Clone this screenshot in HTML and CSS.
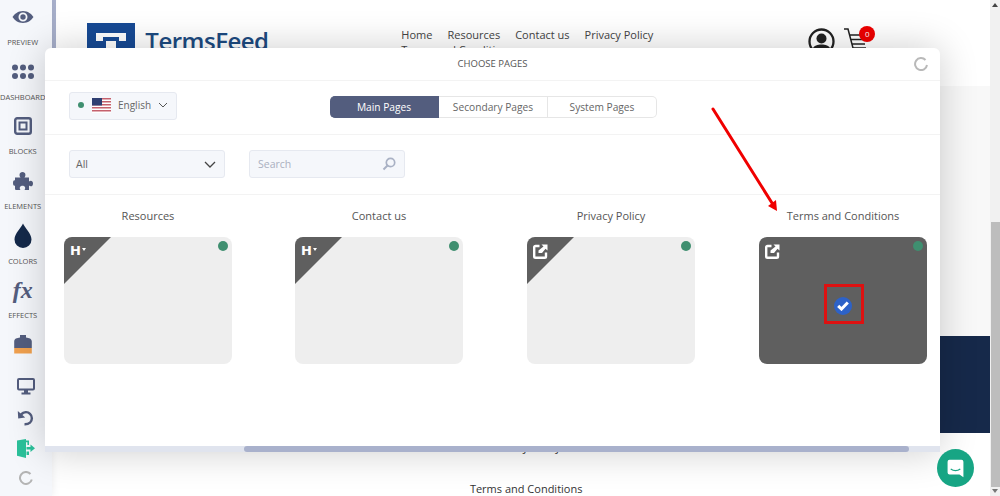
FILE: index.html
```html
<!doctype html>
<html><head>
  <title>TermsFeed - Choose pages</title>
  <meta charset="utf-8">
  <link rel="stylesheet" href="styles.css">
</head><body>

  <!-- editor toolbar -->
  <nav class="sidebar">
    <div class="tool">
      <svg class="tool-icon" width="24" height="16" viewBox="0 0 24 16"><path fill="#535d7e" fill-rule="evenodd" d="M12 2C7 2 3.500 5 1.500 8c2 3 5.500 6 10.500 6s8.500-3 10.500-6C20.500 5 17 2 12 2zm0 1.500a4.500 4.500 0 1 1 0 9 4.500 4.500 0 0 1 0-9z"/><circle cx="12" cy="8" r="2.700" fill="#535d7e"/></svg>
      <span>PREVIEW</span>
    </div>
    <div class="tool">
      <svg class="tool-icon" width="24" height="16" viewBox="0 0 24 16" fill="#535d7e"><circle cx="4" cy="3.500" r="3"/><circle cx="12" cy="3.500" r="3"/><circle cx="20" cy="3.500" r="3"/><circle cx="4" cy="12" r="3"/><circle cx="12" cy="12" r="3"/><circle cx="20" cy="12" r="3"/></svg>
      <span>DASHBOARD</span>
    </div>
    <div class="tool">
      <svg class="tool-icon" width="18" height="18" viewBox="0 0 18 18"><rect x="1.200" y="1.200" width="15.600" height="15.600" rx="2" fill="none" stroke="#535d7e" stroke-width="2.400"/><rect x="5.500" y="5.500" width="7" height="7" fill="none" stroke="#535d7e" stroke-width="2"/></svg>
      <span>BLOCKS</span>
    </div>
    <div class="tool">
      <svg class="tool-icon" width="20" height="20" viewBox="0 0 20 20"><path fill="#535d7e" d="M2 6.500H7.500C6 5 6 1 9.500 1S13 5 11.500 6.500H16v4c1.500-1.500 4-1 4 2s-2.500 3.500-4 2V19h-4.500c1.500-2 .5-4.200-2-4.200S6 17 7.500 19H3.500c-1 0-1.500-.5-1.500-1.500v-3c-.5.500-2 .5-2-2.500s1.500-3 2-2.500z"/></svg>
      <span>ELEMENTS</span>
    </div>
    <div class="tool">
      <svg class="tool-icon" width="18" height="25" viewBox="0 0 18 25"><path fill="#14294a" d="M9 0c1.500 4 8.500 10 8.500 16a8.500 8.500 0 0 1-17 0C.5 10 7.500 4 9 0z"/></svg>
      <span>COLORS</span>
    </div>
    <div class="tool">
      <span class="fx-icon">fx</span>
      <span>EFFECTS</span>
    </div>
    <div class="tool tool-plain">
      <svg class="tool-icon" width="18" height="19" viewBox="0 0 18 19"><path fill="#535d7e" d="M6 0h6v2.500c3 .4 5.800 1.200 5.800 4V13H.2V6.500c0-2.800 2.800-3.600 5.800-4z"/><path fill="#f0a04e" d="M.2 13h17.600v5.500H.2z"/></svg>
    </div>
    <div class="tool-small first">
      <svg width="18" height="17" viewBox="0 0 18 17"><rect x="1" y="1" width="16" height="10.500" rx="1" fill="none" stroke="#535d7e" stroke-width="2"/><path fill="#535d7e" d="M7 12h4v2.500h2.500V16.500h-9v-2H7z"/></svg>
    </div>
    <div class="tool-small">
      <svg width="18" height="18" viewBox="0 0 18 18"><path fill="none" stroke="#535d7e" stroke-width="2.400" d="M4 5.500c2.800-2.600 6.500-3 9-.7 2.500 2.300 2.500 6.500 0 8.800-1.500 1.300-3.300 1.800-5.500 1.700"/><path fill="#535d7e" d="M.8 2l.4 7.400 7-.9z"/></svg>
    </div>
    <div class="tool-small">
      <svg width="18" height="19" viewBox="0 0 18 19"><path fill="#2bc09a" d="M0 1.500 9 0v1.500h3V6h-1.600V3.200H9V19L0 16.800z"/><path fill="#2bc09a" d="M10.400 12.500H12V16H9.500v-3.500z"/><path fill="#2bc09a" d="M9.500 8h4V5.500L18 9.300l-4.500 3.700v-2.500h-4z"/></svg>
    </div>
    <div class="tool-small last">
      <svg width="14" height="14" viewBox="0 0 14 14"><path fill="none" stroke="#b4b4b4" stroke-width="2" d="M11.500 3A6 6 0 1 0 12.800 8.500"/></svg>
    </div>
  </nav>
  <div class="rail"></div>

  <!-- site being edited, behind the dialog -->
  <main class="site">
    <header class="site-header">
      <div class="logo">
        <svg width="48" height="48" viewBox="0 0 48 48"><path fill="#174a94" d="M0 0h48v48H0z"/><path fill="#fff" d="M9 10h30v8h-7v-4H16v4H9zM19 18h10v30H19z"/></svg>
        <span class="logo-text">TermsFeed</span>
      </div>
      <ul class="site-nav">
        <li>Home</li>
        <li>Resources</li>
        <li>Contact us</li>
        <li>Privacy Policy</li>
        <li>Terms and Conditions</li>
      </ul>
      <div class="site-actions">
        <svg width="27" height="27" viewBox="0 0 27 27"><circle cx="13.500" cy="13.500" r="12" fill="#fff" stroke="#222" stroke-width="2.300"/><circle cx="13.500" cy="10.500" r="5" fill="#222"/><path fill="#222" d="M4.500 21c1.500-3.500 5-4.500 9-4.500s7.500 1 9 4.500c-2 2.800-5.500 4-9 4s-7-1.200-9-4z"/></svg>
        <div class="cart">
          <svg width="27" height="26" viewBox="0 0 27 26"><path fill="none" stroke="#222" stroke-width="1.500" d="M1 1h4l5 19h13M7 7h18M8 11.500h15M9 16h13"/><circle cx="12" cy="23.500" r="1.800" fill="#222"/><circle cx="21" cy="23.500" r="1.800" fill="#222"/></svg>
          <span class="cart-count">0</span>
        </div>
      </div>
    </header>
    <section class="site-body"></section>
    <section class="site-band"></section>
    <footer class="site-footer">
      <p>Privacy Policy</p>
      <p>Terms and Conditions</p>
    </footer>
  </main>

  <div class="scrollbar">
    <span class="arrow-up"></span>
    <span class="thumb"></span>
    <span class="arrow-down"></span>
  </div>

  <!-- choose pages dialog -->
  <div class="modal">
    <div class="modal-head">
      <span>CHOOSE PAGES</span>
      <svg class="head-spinner" width="14" height="14" viewBox="0 0 14 14"><path fill="none" stroke="#b9b9b9" stroke-width="2" d="M11.500 3A6 6 0 1 0 13 8"/></svg>
    </div>

    <div class="toolbar">
      <div class="lang-select">
        <i class="dot"></i>
        <svg width="19" height="15" viewBox="0 0 19 15"><path fill="#fff" d="M0 0h19v15H0z"/><path fill="#c5616d" d="M0 0h19v1.500H0zM0 3h19v1.500H0zM0 6h19v1.500H0zM0 9h19v1.500H0zM0 12h19v1.500H0z"/><path fill="#2f3f72" d="M0 0h10v7.500H0z"/></svg>
        <span>English</span>
        <svg class="chevron" width="10" height="6" viewBox="0 0 10 6"><path fill="none" stroke="#555" stroke-width="1" d="M1 1l4 4 4-4"/></svg>
      </div>
      <div class="tabs">
        <span class="tab active">Main Pages</span>
        <span class="tab">Secondary Pages</span>
        <span class="tab">System Pages</span>
      </div>
    </div>

    <div class="filters">
      <div class="field">
        <span>All</span>
        <svg width="12" height="7" viewBox="0 0 12 7"><path fill="none" stroke="#444" stroke-width="1.300" d="M1 1l5 5 5-5"/></svg>
      </div>
      <div class="field search">
        <span>Search</span>
        <svg width="14" height="14" viewBox="0 0 14 14"><circle cx="8.500" cy="5.500" r="4.200" fill="none" stroke="#a9b1c4" stroke-width="1.700"/><path stroke="#a9b1c4" stroke-width="2" d="M5.500 8.500 1.500 12.500"/></svg>
      </div>
    </div>

    <div class="pages">
      <div class="page-item">
        <h4>Resources</h4>
        <div class="card">
          <span class="corner"></span>
          <span class="home-mark">H<i></i></span>
          <i class="dot big"></i>
        </div>
      </div>
      <div class="page-item">
        <h4>Contact us</h4>
        <div class="card">
          <span class="corner"></span>
          <span class="home-mark">H<i></i></span>
          <i class="dot big"></i>
        </div>
      </div>
      <div class="page-item">
        <h4>Privacy Policy</h4>
        <div class="card">
          <span class="corner"></span>
          <svg class="link-mark" width="15" height="15" viewBox="0 0 15 15"><path fill="none" stroke="#fff" stroke-width="2.400" d="M6.500 2H2.500A1.300 1.300 0 0 0 1.200 3.300v9.200a1.300 1.300 0 0 0 1.300 1.300h9.200a1.300 1.300 0 0 0 1.300-1.300V8.500"/><path fill="#fff" d="M8.500.5h6V6.500l-2-1.800-3.500 4.300H5.500V6.500L10.500 2.500z"/></svg>
          <i class="dot big"></i>
        </div>
      </div>
      <div class="page-item">
        <h4>Terms and Conditions</h4>
        <div class="card selected">
          <svg class="link-mark" width="15" height="15" viewBox="0 0 15 15"><path fill="none" stroke="#fff" stroke-width="2.400" d="M6.500 2H2.500A1.300 1.300 0 0 0 1.200 3.300v9.200a1.300 1.300 0 0 0 1.300 1.300h9.200a1.300 1.300 0 0 0 1.300-1.300V8.500"/><path fill="#fff" d="M8.500.5h6V6.500l-2-1.800-3.500 4.300H5.500V6.500L10.500 2.500z"/></svg>
          <i class="dot big"></i>
          <span class="check">
            <svg width="12" height="10" viewBox="0 0 12 10"><path fill="none" stroke="#fff" stroke-width="3" d="M1.200 4.800 4.500 8 10.800 1.500"/></svg>
          </span>
          <span class="highlight"></span>
        </div>
      </div>
    </div>

    <div class="hscroll"><span></span></div>

    <svg class="annotation" width="70" height="106" viewBox="0 0 70 106"><path stroke="#f00000" stroke-width="3" stroke-linecap="round" fill="none" d="M2 2 61 96"/><path fill="#f00000" d="M66 104 57 99 65 93z"/></svg>
  </div>

  <div class="chat">
    <svg width="17" height="19" viewBox="0 0 21 24"><path fill="#fff" d="M3 1h15a2.500 2.500 0 0 1 2.500 2.500V23l-5-3.500H3A2.500 2.500 0 0 1 .5 17V3.500A2.500 2.500 0 0 1 3 1z"/><path fill="none" stroke="#17a584" stroke-width="1.600" stroke-linecap="round" d="M5 13c3 2.200 8 2.200 11 0"/></svg>
  </div>

</body></html>
```

FILE: styles.css
```css
* {
    box-sizing: border-box;
}

html, body {
    margin: 0;
    height: 496px;
    overflow: hidden;
}

body {
    display: flex;
    position: relative;
    background: white;
    color: #444;
    font: 11px/16px 'Open Sans', 'Liberation Sans', sans-serif;
}

/* toolbar on the left */

.sidebar {
    flex: 0 0 52px;
    display: flex;
    flex-direction: column;
    align-items: stretch;
    padding-right: 7px;
    background: #f5f7fb;
    box-shadow: 0 0 8px rgba(70, 80, 110, .12);
    z-index: 1;
}

.tool {
    height: 54.7px;
    display: flex;
    flex-direction: column;
    align-items: center;
    padding-top: 4px;
    font-size: 7.500px;
    line-height: 12px;
    color: #555;
    white-space: nowrap;
}

.tool-icon {
    height: 26px;
    display: block;
}

.tool > span:last-child {
    margin-top: 6px;
}

.fx-icon {
    height: 26px;
    font: italic bold 24px/26px 'Liberation Serif', serif;
    color: #535d7e;
}

.tool-plain {
    height: 30px;
    margin-top: -1px;
    padding-top: 5px;
}

.tool-small {
    height: 31px;
    display: flex;
    align-items: center;
    justify-content: center;
    padding-left: 6px;
}

.first {
    margin-top: 14px;
}

.last {
    margin-top: -2px;
}

.rail {
    flex: 0 0 4px;
    height: 120px;
    background: #a9b1cc;
}

/* the site behind the dialog */

.site {
    flex: 1;
    min-width: 0;
    display: flex;
    flex-direction: column;
}

.site-header {
    height: 86px;
    flex: none;
    display: flex;
    align-items: flex-start;
    padding: 23px 0 0 31px;
    background: white;
}

.logo {
    display: flex;
    width: 314px;
}

.logo-text {
    margin-left: 10px;
    margin-top: 2px;
    font: 600 24px/32px 'Open Sans', sans-serif;
    letter-spacing: -.5px;
    color: #1c4a80;
}

.site-nav {
    width: 280px;
    display: flex;
    flex-wrap: wrap;
    column-gap: 15px;
    margin: 4px 0 0;
    padding: 0;
    list-style: none;
    line-height: 15px;
    color: #444;
}

.site-actions {
    display: flex;
    gap: 8px;
    margin: 5px 0 0 127px;
}

.cart {
    position: relative;
}

.cart-count {
    position: absolute;
    top: -2px;
    left: 16px;
    width: 16px;
    height: 16px;
    border-radius: 50%;
    background: #ee0000;
    color: white;
    font-size: 8px;
    line-height: 16px;
    text-align: center;
}

.site-body {
    height: 250px;
    flex: none;
    background: #f8f8f8;
}

.site-band {
    height: 97px;
    flex: none;
    background: #16294a;
}

.site-footer {
    text-align: center;
    padding-left: 6px;
    color: #333;
}

.site-footer p {
    margin: 0;
    padding-top: 6px;
    height: 42px;
}

.scrollbar {
    flex: 0 0 10px;
    display: flex;
    flex-direction: column;
    align-items: center;
    background: #f1f1f1;
    padding: 3px 0 1px;
    position: relative;
}

.thumb {
    width: 9px;
    flex: none;
    height: 265px;
    margin: 215px 0 2px 1px;
    background: #bdbdbd;
}

.arrow-up {
    width: 0;
    height: 0;
    border: 3px solid transparent;
    border-top: 0;
    border-bottom: 4px solid #444;
}

.arrow-down {
    width: 0;
    height: 0;
    border: 3px solid transparent;
    border-bottom: 0;
    border-top: 4px solid #777;
}

/* dialog */

.modal {
    position: absolute;
    left: 45px;
    top: 48px;
    width: 895px;
    height: 404px;
    background: white;
    border-radius: 6px 6px 0 0;
    box-shadow: 0 0 38px rgba(0, 0, 0, .2);
    display: flex;
    flex-direction: column;
    z-index: 2;
}

.modal-head {
    height: 33px;
    flex: none;
    display: flex;
    align-items: center;
    justify-content: center;
    position: relative;
    border-bottom: 1px solid #f3f3f3;
    font-size: 9.500px;
    color: #555;
}

.head-spinner {
    position: absolute;
    right: 12px;
    top: 9px;
}

.toolbar {
    height: 54px;
    flex: none;
    display: flex;
    align-items: flex-start;
    padding: 11px 0 0 24px;
    border-bottom: 1px solid #f3f3f3;
}

.lang-select {
    width: 108px;
    height: 28px;
    display: flex;
    align-items: center;
    padding: 0 0 2px 8px;
    background: #f5f7fb;
    border: 1px solid #e6e9f0;
    border-radius: 3px;
    font-size: 10px;
    color: #666;
}

.lang-select svg {
    margin-left: 8px;
}

.lang-select span {
    margin-left: 7px;
}

.lang-select .chevron {
    margin-left: 7px;
}

.dot {
    display: block;
    width: 6px;
    height: 6px;
    flex: none;
    border-radius: 50%;
    background: #3f8f70;
}

.tabs {
    display: flex;
    margin: 4px 0 0 153px;
    height: 22px;
}

.tab {
    width: 109px;
    display: flex;
    align-items: center;
    justify-content: center;
    border: 1px solid #e6e6e6;
    border-left: 0;
    font-size: 10.200px;
    color: #666;
}

.tab:last-child {
    border-radius: 0 5px 5px 0;
}

.tab.active {
    background: #535d7e;
    border-color: #535d7e;
    border-radius: 5px 0 0 5px;
    color: white;
}

.filters {
    height: 60px;
    flex: none;
    display: flex;
    gap: 24px;
    padding: 15px 0 0 24px;
    border-bottom: 1px solid #f3f3f3;
}

.field {
    width: 156px;
    height: 28px;
    display: flex;
    align-items: center;
    justify-content: space-between;
    padding: 0 8px 0 6px;
    background: #f5f7fb;
    border: 1px solid #e6e9f0;
    border-radius: 3px;
    font-size: 10.500px;
    color: #666;
}

.search {
    padding-left: 8px;
    color: #aab0bf;
}

.pages {
    flex: 1;
    display: grid;
    grid-template-columns: 231px 232px 232px 168px;
    padding: 13px 0 0 19px;
}

.page-item {
    width: 168px;
}

.page-item h4 {
    margin: 0 0 13px;
    font-size: 11px;
    font-weight: 400;
    line-height: 16px;
    text-align: center;
    color: #555;
}

.card {
    position: relative;
    height: 127px;
    border-radius: 8px;
    background: #eeeeee;
    overflow: hidden;
}

.card.selected {
    background: #5f5f5f;
    overflow: visible;
}

.corner {
    position: absolute;
    left: 0;
    top: 0;
    border-style: solid;
    border-width: 47px 47px 0 0;
    border-color: #5f5f5f transparent transparent transparent;
}

.home-mark {
    position: absolute;
    left: 6px;
    top: 6px;
    font: bold 13px/16px 'DejaVu Sans', sans-serif;
    color: white;
}

.home-mark i {
    display: inline-block;
    margin: 0 0 4px 1px;
    border: 2.500px solid transparent;
    border-bottom: 0;
    border-top: 3px solid white;
}

.link-mark {
    position: absolute;
    left: 6px;
    top: 7px;
}

.dot.big {
    position: absolute;
    right: 4px;
    top: 4px;
    width: 10px;
    height: 10px;
}

.check {
    position: absolute;
    left: 75px;
    top: 60px;
    width: 18px;
    height: 18px;
    display: flex;
    align-items: center;
    justify-content: center;
    border-radius: 50%;
    background: #2d62c8;
}

.highlight {
    position: absolute;
    left: 65px;
    top: 47px;
    width: 40px;
    height: 40px;
    border: 3px solid #dd1111;
}

.hscroll {
    height: 6px;
    flex: none;
    padding-left: 199px;
    padding-right: 31px;
    background: #e0e4ee;
}

.hscroll span {
    display: block;
    height: 6px;
    border-radius: 3px;
    background: #a9b1cc;
}

.annotation {
    position: absolute;
    left: 666px;
    top: 59px;
}

.chat {
    position: absolute;
    left: 937px;
    top: 449px;
    width: 37px;
    height: 38px;
    display: flex;
    align-items: center;
    justify-content: center;
    border-radius: 50%;
    background: #17a584;
    z-index: 3;
}
```
